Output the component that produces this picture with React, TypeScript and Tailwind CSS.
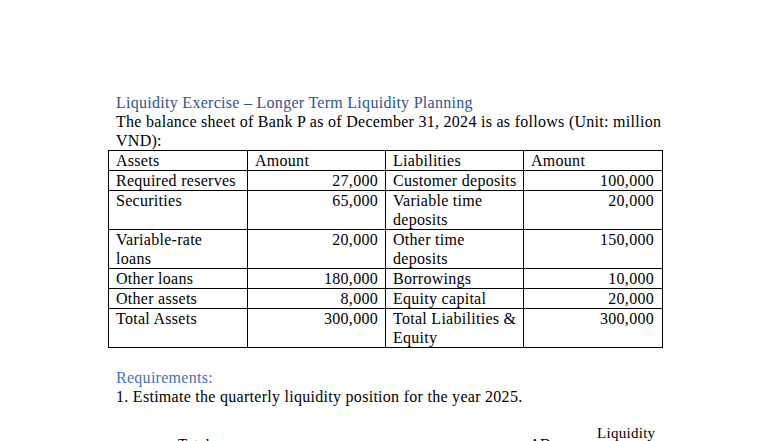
import React from "react";

const rows: { a: string[]; av: string; l: string[]; lv: string }[] = [
  { a: ["Required reserves"], av: "27,000", l: ["Customer deposits"], lv: "100,000" },
  { a: ["Securities"], av: "65,000", l: ["Variable time", "deposits"], lv: "20,000" },
  { a: ["Variable-rate", "loans"], av: "20,000", l: ["Other time", "deposits"], lv: "150,000" },
  { a: ["Other loans"], av: "180,000", l: ["Borrowings"], lv: "10,000" },
  { a: ["Other assets"], av: "8,000", l: ["Equity capital"], lv: "20,000" },
  { a: ["Total Assets"], av: "300,000", l: ["Total Liabilities &", "Equity"], lv: "300,000" },
];

function Lines({ items }: { items: string[] }) {
  return (
    <>
      {items.map((t, i) => (
        <div key={i} className="whitespace-nowrap">
          {t}
        </div>
      ))}
    </>
  );
}

export default function App() {
  return (
    <div
      className="h-[441px] w-[784px] overflow-hidden bg-white text-black"
      style={{ fontFamily: '"Liberation Serif", "Times New Roman", serif' }}
    >
      <div className="pt-[93px] pl-[116px] text-[16px] leading-[19px] tracking-[0.28px]">
        <div className="whitespace-nowrap text-[#2f5496]">
          Liquidity Exercise – Longer Term Liquidity Planning
        </div>
        <div className="whitespace-nowrap">
          The balance sheet of Bank P as of December 31, 2024 is as follows (Unit: million
        </div>
        <div className="whitespace-nowrap">VND):</div>

        <table className="-ml-[8px] w-[554px] table-fixed border-collapse">
          <colgroup>
            <col className="w-[139px]" />
            <col className="w-[138px]" />
            <col className="w-[138px]" />
            <col className="w-[139px]" />
          </colgroup>
          <tbody>
            <tr>
              <td className="border border-black px-[7px] py-0 align-top">Assets</td>
              <td className="border border-black px-[7px] py-0 align-top">Amount</td>
              <td className="border border-black px-[7px] py-0 align-top">Liabilities</td>
              <td className="border border-black px-[7px] py-0 align-top">Amount</td>
            </tr>
            {rows.map((r, i) => (
              <tr key={i}>
                <td className="border border-black px-[7px] py-0 align-top">
                  <Lines items={r.a} />
                </td>
                <td className="border border-black px-[7px] py-0 text-right align-top">{r.av}</td>
                <td className="border border-black px-[7px] py-0 align-top">
                  <Lines items={r.l} />
                </td>
                <td className="border border-black pl-[7px] pr-[8px] py-0 text-right align-top">{r.lv}</td>
              </tr>
            ))}
          </tbody>
        </table>

        <div className="mt-[20px] whitespace-nowrap text-[#4472c4]">Requirements:</div>
        <div className="whitespace-nowrap">1. Estimate the quarterly liquidity position for the year 2025.</div>

        <div className="mt-[18px] flex items-start text-[15px] leading-[18px]">
          <div className="w-[62px]" />
          <div className="mt-[11px] w-[352px]">Total</div>
          <div className="mt-[11px] w-[67px]">ΔD</div>
          <div className="w-[70px]">Liquidity</div>
        </div>
      </div>
    </div>
  );
}
